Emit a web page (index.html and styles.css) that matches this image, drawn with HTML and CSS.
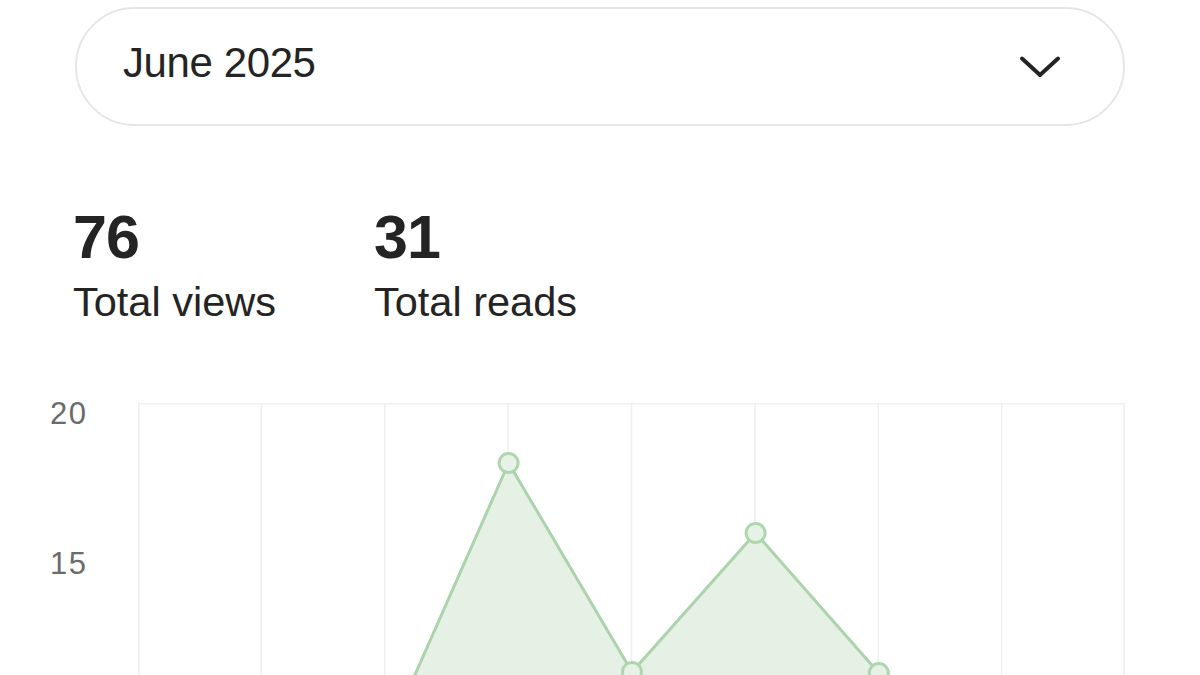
FILE: index.html
```html
<!DOCTYPE html>
<html lang="en">
<head>
<meta charset="utf-8">
<title>Stats – June 2025</title>
<link rel="stylesheet" href="styles.css">
</head>
<body>
<main class="page">
  <button class="month-select" type="button">
    <span class="month-label">June 2025</span>
    <svg class="chevron" width="42" height="22" viewBox="0 0 42 22" aria-hidden="true">
      <path d="M3 2.5 L21 19 L39 2.5" fill="none" stroke="#242424" stroke-width="4" stroke-linecap="round" stroke-linejoin="round"/>
    </svg>
  </button>

  <section class="stats">
    <div class="stat">
      <div class="stat-value">76</div>
      <div class="stat-label">Total views</div>
    </div>
    <div class="stat">
      <div class="stat-value">31</div>
      <div class="stat-label">Total reads</div>
    </div>
  </section>

  <section class="chart">
    <div class="y-axis">
      <div class="tick">20</div>
      <div class="tick">15</div>
    </div>
    <svg class="plot" width="987" height="420" viewBox="0 0 987 420" aria-label="Daily views">
      <!-- column grid -->
      <g stroke="#efefef" stroke-width="1.5">
        <line x1="0" y1="0.75" x2="987" y2="0.75"/>
        <line x1="0.75" y1="0" x2="0.75" y2="420"/>
        <line x1="123.4" y1="0" x2="123.4" y2="420"/>
        <line x1="246.8" y1="0" x2="246.8" y2="420"/>
        <line x1="370.1" y1="0" x2="370.1" y2="420"/>
        <line x1="493.5" y1="0" x2="493.5" y2="420"/>
        <line x1="616.9" y1="0" x2="616.9" y2="420"/>
        <line x1="740.3" y1="0" x2="740.3" y2="420"/>
        <line x1="863.6" y1="0" x2="863.6" y2="420"/>
        <line x1="986.2" y1="0" x2="986.2" y2="420"/>
      </g>
      <!-- views area -->
      <path d="M0 420 L0 400 L123.4 390 L246.8 340 L370.6 60 L494 269 L617.6 130 L740.8 270 L864 380 L986 400 L986 420 Z" fill="#e4f1e4"/>
      <path d="M0 400 L123.4 390 L246.8 340 L370.6 60 L494 269 L617.6 130 L740.8 270 L864 380 L986 400" fill="none" stroke="#acd3ac" stroke-width="3" stroke-linejoin="round"/>
      <g fill="#e6f2e6" stroke="#b0d6b0" stroke-width="3">
        <circle cx="246.8" cy="340" r="9.5"/>
        <circle cx="370.6" cy="60" r="9.5"/>
        <circle cx="494" cy="269" r="9.5"/>
        <circle cx="617.6" cy="130" r="9.5"/>
        <circle cx="740.8" cy="270" r="9.5"/>
        <circle cx="864" cy="380" r="9.5"/>
      </g>
    </svg>
  </section>
</main>
</body>
</html>
```

FILE: styles.css
```css
html, body {
  margin: 0;
  padding: 0;
  background: #ffffff;
  height: 675px;
  overflow: hidden;
}

body {
  font-family: "Liberation Sans", Arial, sans-serif;
  color: #242424;
}

.page {
  padding: 7px 75px 0 75px;
}

/* month dropdown pill */
.month-select {
  box-sizing: border-box;
  width: 1050px;
  height: 119px;
  display: flex;
  align-items: center;
  justify-content: space-between;
  padding: 0 62px 0 46px;
  border: 2px solid #e6e6e6;
  border-radius: 60px;
  background: #ffffff;
  font-family: inherit;
  color: #242424;
  cursor: pointer;
}

.month-label {
  font-size: 42px;
  letter-spacing: -0.4px;
  line-height: 48px;
  margin-bottom: 8px;
}

.chevron {
  display: block;
}

/* totals */
.stats {
  display: flex;
  gap: 98px;
  margin: 78px 0 0 -2px;
}

.stat-value {
  font-size: 61px;
  font-weight: 700;
  line-height: 66px;
  letter-spacing: -1px;
}

.stat-label {
  font-size: 41.5px;
  line-height: 50px;
  margin-top: 7px;
}

/* chart */
.chart {
  display: flex;
  margin: 76px 0 0 -25px;
}

.y-axis {
  width: 88px;
  flex: none;
  display: flex;
  flex-direction: column;
  margin-top: -4px;
}

.tick {
  height: 150px;
  font-size: 31px;
  line-height: 30px;
  letter-spacing: 1.5px;
  color: #6b6b6b;
}

.plot {
  display: block;
  flex: none;
}
```
